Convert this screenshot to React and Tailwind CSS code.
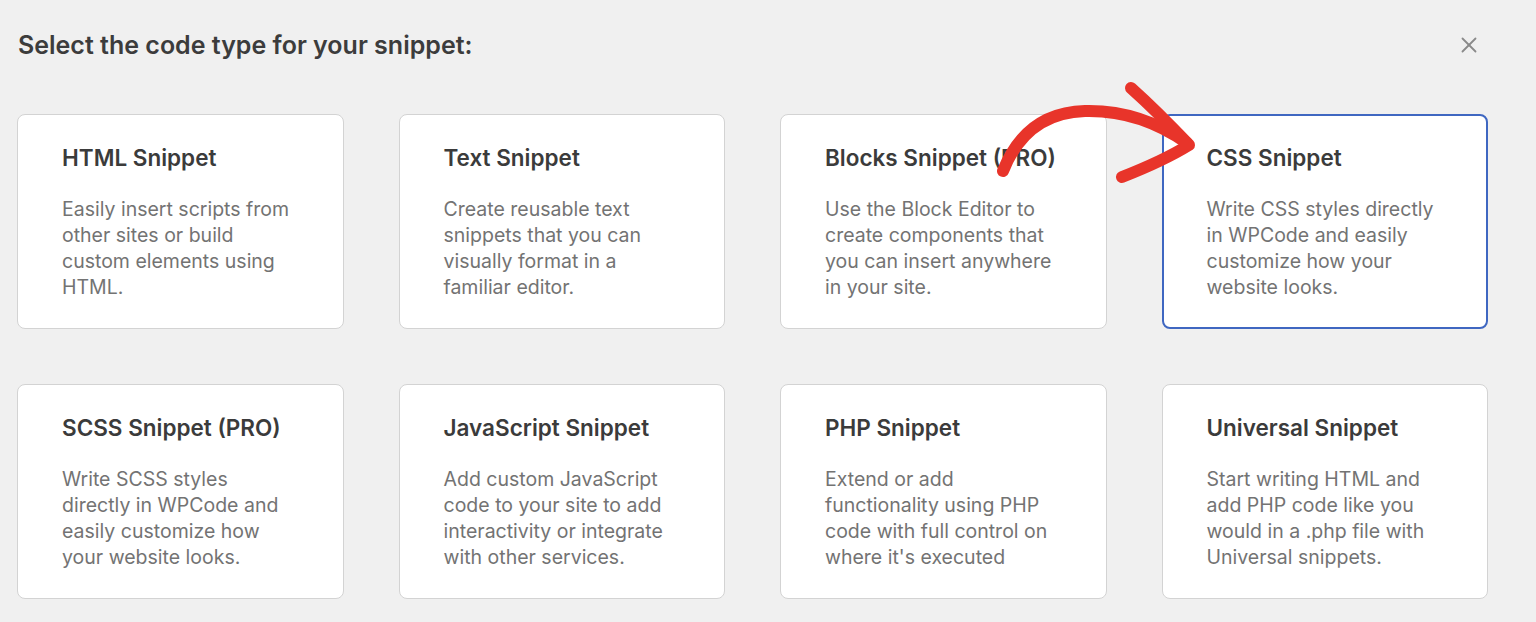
import { X } from 'lucide-react'

const snippets = [
  {
    title: 'HTML Snippet',
    lines: ['Easily insert scripts from', 'other sites or build', 'custom elements using', 'HTML.'],
  },
  {
    title: 'Text Snippet',
    lines: ['Create reusable text', 'snippets that you can', 'visually format in a', 'familiar editor.'],
  },
  {
    title: 'Blocks Snippet (PRO)',
    lines: ['Use the Block Editor to', 'create components that', 'you can insert anywhere', 'in your site.'],
  },
  {
    title: 'CSS Snippet',
    lines: ['Write CSS styles directly', 'in WPCode and easily', 'customize how your', 'website looks.'],
    active: true,
  },
  {
    title: 'SCSS Snippet (PRO)',
    lines: ['Write SCSS styles', 'directly in WPCode and', 'easily customize how', 'your website looks.'],
  },
  {
    title: 'JavaScript Snippet',
    lines: ['Add custom JavaScript', 'code to your site to add', 'interactivity or integrate', 'with other services.'],
  },
  {
    title: 'PHP Snippet',
    lines: ['Extend or add', 'functionality using PHP', 'code with full control on', "where it's executed"],
  },
  {
    title: 'Universal Snippet',
    lines: ['Start writing HTML and', 'add PHP code like you', 'would in a .php file with', 'Universal snippets.'],
  },
]

function SnippetCard({ title, lines, active }) {
  return (
    <div
      className={
        active
          ? 'bg-white rounded-[8px] border-2 border-[#3f67c1] pl-[43px] pr-[20px] pt-[28px] pb-[27px]'
          : 'bg-white rounded-[8px] border border-[#d3d3d3] pl-[44px] pr-[21px] pt-[29px] pb-[28px]'
      }
    >
      <div className="text-[22.5px] leading-[28px] font-semibold text-[#3b3b3b] whitespace-nowrap">
        {title}
      </div>
      <div className="mt-[24px] text-[19.5px] leading-[26px] text-[#737373]">
        {lines.map((l) => (
          <div key={l} className="whitespace-nowrap">{l}</div>
        ))}
      </div>
    </div>
  )
}

export default function App() {
  return (
    <div
      className="relative w-full h-[622px] bg-[#f0f0f0] overflow-hidden pl-[17px] pr-[48px]"
      style={{ fontFamily: 'Inter, "Noto Sans", sans-serif' }}
    >
      <div className="flex items-center justify-between pt-[30px]">
        <h1 className="pl-[1px] text-[25px] leading-[30px] font-semibold text-[#3c3c3c]">
          Select the code type for your snippet:
        </h1>
        <button className="mr-[6px] text-[#8a8a8a]">
          <X size={26} strokeWidth={1.7} />
        </button>
      </div>

      <div className="grid grid-cols-4 gap-x-[55px] gap-y-[55px] mt-[54px]">
        {snippets.map((s) => (
          <SnippetCard key={s.title} {...s} />
        ))}
      </div>

      {/* hand-drawn arrow pointing at the CSS card */}
      <svg
        className="absolute left-0 top-0 pointer-events-none"
        width="1536"
        height="622"
        viewBox="0 0 1536 622"
      >
        <g fill="none" stroke="#e8342a" strokeWidth="12" strokeLinecap="round" strokeLinejoin="round">
          <path d="M1003 171 C1020 128 1050 112 1085 111 C1125 110 1160 124 1187 143" />
          <path d="M1131 88 C1150 105 1170 125 1189 145 C1168 158 1145 168 1122 177" />
        </g>
      </svg>
    </div>
  )
}
